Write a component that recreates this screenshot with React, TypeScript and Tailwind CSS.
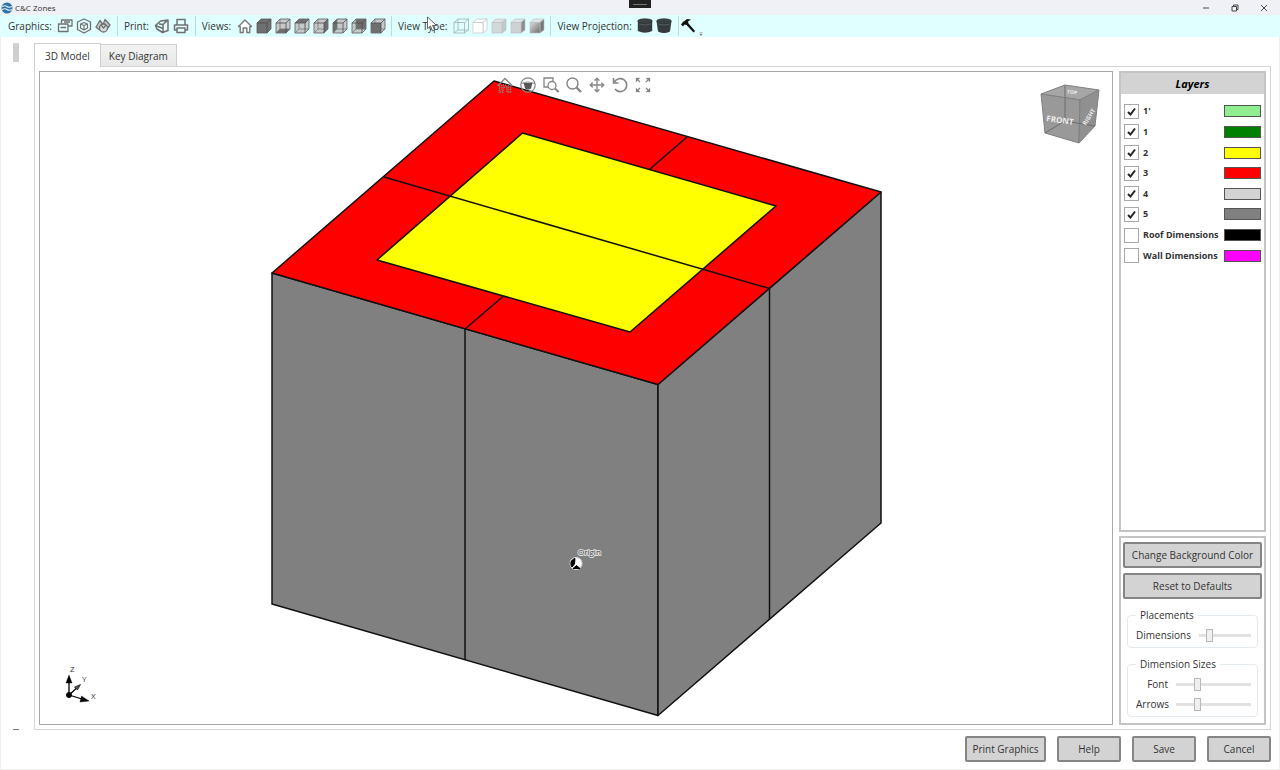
import React, { useState } from 'react';
import { Move } from 'lucide-react';

type Face = 'all' | 'bottom' | 'top' | 'right' | 'left' | 'back' | 'front';
type Shade = 'wire' | 'hidden' | 'flat' | 'shaded' | 'render';

interface Layer {
  id: string;
  color: string;
  visible: boolean;
}

const INITIAL_LAYERS: Layer[] = [
  { id: "1'", color: '#90ee90', visible: true },
  { id: '1', color: '#008000', visible: true },
  { id: '2', color: '#ffff00', visible: true },
  { id: '3', color: '#ff0000', visible: true },
  { id: '4', color: '#d3d3d3', visible: true },
  { id: '5', color: '#808080', visible: true },
  { id: 'Roof Dimensions', color: '#000000', visible: false },
  { id: 'Wall Dimensions', color: '#ff00ff', visible: false },
];

const FACE_POINTS: Record<Exclude<Face, 'all'>, string> = {
  bottom: '1,15 5,11 15,11 11,15',
  top: '1,5 5,1 15,1 11,5',
  right: '11,5 15,1 15,11 11,15',
  left: '1,5 5,1 5,11 1,15',
  back: '5,1 15,1 15,11 5,11',
  front: '1,5 11,5 11,15 1,15',
};

const FACES: Face[] = ['all', 'bottom', 'top', 'right', 'left', 'back', 'front'];
const SHADES: Shade[] = ['wire', 'hidden', 'flat', 'shaded', 'render'];

const FaceIcon: React.FC<{ face: Face }> = ({ face }) => (
  <svg viewBox="0 0 16 16" className="h-4 w-4" strokeLinejoin="round" strokeWidth=".8">
    <polygon points="1,5 5,1 15,1 15,11 11,15 1,15" fill={face === 'all' ? '#707070' : '#c6c9c9'} stroke="#5c5c5c" />
    {face !== 'all' && <polygon points={FACE_POINTS[face]} fill="#6e6e6e" />}
    {face !== 'all' && <path d="M5 1V11H15M5 11L1 15" stroke="#777" fill="none" />}
    <path d="M1 5H11V15M11 5L15 1" stroke="#4c4c4c" fill="none" />
  </svg>
);

const ShadeIcon: React.FC<{ shade: Shade }> = ({ shade }) => {
  if (shade === 'wire') {
    return (
      <svg viewBox="0 0 16 16" className="h-4 w-4" fill="none" stroke="#9fb0b0" strokeWidth=".8">
        <path d="M1 4.500H11.500V15H1ZM5 1H15.500V12H5ZM1 4.500L5 1M11.500 4.500L15.500 1M11.500 15L15.500 12M1 15L5 12" />
      </svg>
    );
  }
  const side = { hidden: '#fff', flat: '#c4c9c9', shaded: '#8d8d8d', render: '#777' }[shade];
  const front = { hidden: '#fff', flat: '#d3d8d8', shaded: '#cfd2d2', render: 'url(#renderFront)' }[shade];
  return (
    <svg viewBox="0 0 16 16" className="h-4 w-4" stroke="#b5bcbc" strokeWidth=".6">
      <defs>
        <linearGradient id="renderFront" x1="0" x2="1" y1="0" y2="1">
          <stop offset="0" stopColor="#ddd" />
          <stop offset="1" stopColor="#6d6d6d" />
        </linearGradient>
      </defs>
      <polygon points="1,4.500 5,1 15,1 11,4.500" fill={shade === 'hidden' ? '#fff' : '#dfe3e3'} />
      <polygon points="11,4.500 15,1 15,12 11,15" fill={side} />
      <rect x="1" y="4.500" width="10" height="10.500" fill={front} />
    </svg>
  );
};

const HomeIcon = () => (
  <svg viewBox="0 0 16 16" className="h-4 w-4" fill="#fff" stroke="#777" strokeWidth="1.400" strokeLinejoin="round">
    <path d="M1.500 8.500L8 2L14.500 8.500H12.800V14.500H9.800V10H6.200V14.500H3.200V8.500Z" />
  </svg>
);

const CylinderIcon: React.FC<{ tapered?: boolean }> = ({ tapered }) => (
  <svg viewBox="0 0 16 16" className="h-4 w-4">
    <path d={tapered ? 'M.5 3L2 13.500Q8 16.500 14 13.500L15.500 3Z' : 'M.8 3V13Q8 16.500 15.200 13V3Z'} fill="#363b3d" />
    <ellipse cx="8" cy="3" rx="7.300" ry="2.300" fill="#3b4144" stroke="#2c3234" strokeWidth=".6" />
    <path d="M2 6Q8 8 14 6" stroke="#59636a" fill="none" strokeWidth=".8" />
  </svg>
);

const ToolButton: React.FC<{ label: string; children: React.ReactNode }> = ({ label, children }) => (
  <button type="button" aria-label={label} title={label} className="flex h-5 w-[19px] shrink-0 items-center justify-center">
    {children}
  </button>
);

const ToolGroup: React.FC<{ label: string; children: React.ReactNode }> = ({ label, children }) => (
  <div className="flex h-5 shrink-0 items-center border-r border-[#bcdcdc] pr-1 pl-1.5">
    <span className="mr-1 whitespace-nowrap">{label}</span>
    {children}
  </div>
);

const line = { fill: 'none', stroke: '#707070', strokeWidth: 1.3, strokeLinejoin: 'round' as const };

const Toolbar = () => (
  <div className="flex h-[22px] shrink-0 items-center bg-[#e0ffff] pl-0.5">
    <ToolGroup label="Graphics:">
      <ToolButton label="Copy graphics">
        <svg viewBox="0 0 16 16" className="h-4 w-4" {...line}>
          <path d="M4.500 5V2H15V8H11.500M1.500 6H11V13.500H1.500ZM7 4H13M3.500 9.500H9" />
        </svg>
      </ToolButton>
      <ToolButton label="Box graphics">
        <svg viewBox="0 0 16 16" className="h-4 w-4" {...line}>
          <path d="M8 1L14.500 4V11.500L8 15L1.500 11.500V4Z" />
          <path d="M4.500 6L8 4.500L11.500 6V10L8 12L4.500 10ZM4.500 6L8 7.500L11.500 6M8 7.500V12" strokeWidth="1.100" />
        </svg>
      </ToolButton>
      <ToolButton label="Graphic shapes">
        <svg viewBox="0 0 16 16" className="h-4 w-4" {...line}>
          <path d="M5 2.500L8 6.500L4.500 12L1 9ZM10 1.500L15 7L12 11L8 7Z" fill="#c3caca" />
          <circle cx="8.500" cy="10" r="4" fill="#d5dcdc" />
          <path d="M6 7L8.500 10L11 7" />
        </svg>
      </ToolButton>
    </ToolGroup>
    <ToolGroup label="Print:">
      <ToolButton label="Print preview">
        <svg viewBox="0 0 16 16" className="h-4 w-4" {...line} strokeWidth="1.500">
          <path d="M1.500 7.500L6.500 3L14 2V12.500L8.500 14.500L3 11ZM5 6L9 6.500L14 2M9 6.500V14M1.500 7.500L9 10.500" />
        </svg>
      </ToolButton>
      <ToolButton label="Print">
        <svg viewBox="0 0 16 16" className="h-4 w-4" {...line} strokeWidth="1.500">
          <path d="M4 7V1.500H12V7M3.500 12H1.500V7H14.500V12H12.500M4 10H12V14.500H4Z" />
        </svg>
      </ToolButton>
    </ToolGroup>
    <ToolGroup label="Views:">
      <ToolButton label="Home view">
        <HomeIcon />
      </ToolButton>
      {FACES.map((face) => (
        <ToolButton key={face} label={`View ${face}`}>
          <FaceIcon face={face} />
        </ToolButton>
      ))}
    </ToolGroup>
    <ToolGroup label="View Type:">
      {SHADES.map((shade) => (
        <ToolButton key={shade} label={`Style ${shade}`}>
          <ShadeIcon shade={shade} />
        </ToolButton>
      ))}
    </ToolGroup>
    <ToolGroup label="View Projection:">
      <ToolButton label="Orthographic">
        <CylinderIcon />
      </ToolButton>
      <ToolButton label="Perspective">
        <CylinderIcon tapered />
      </ToolButton>
    </ToolGroup>
    <div className="flex items-end">
      <ToolButton label="Settings">
        <svg viewBox="0 0 16 16" className="h-4 w-4">
          <path d="M1 6.500L3 4L7 1L11 1.500L8 3.500L8.500 5.500L15 13L13.500 14.500L6.500 7L4.500 6.500L3 8.500Z" fill="#111" />
        </svg>
      </ToolButton>
      <svg viewBox="0 0 5 5" className="h-1 w-1.5">
        <path d="M.5 .5H4.500M1 2.500H4L2.500 4.500Z" fill="#777" stroke="#777" strokeWidth=".6" />
      </svg>
    </div>
  </div>
);

const TitleBar = () => (
  <header className="flex h-[15px] shrink-0 items-center justify-between bg-[#eff1f6] pr-3 pl-px">
    <div className="flex items-center gap-0.5">
      <svg viewBox="0 0 12 12" className="h-3 w-3">
        <circle cx="6" cy="6" r="5.500" fill="#2f74a8" />
        <path d="M1 4.500Q4 3 6 4.500T11 4.500M1 7.500Q4 6 6 7.500T11 7.500" stroke="#e8f2f8" fill="none" strokeWidth="1.200" />
      </svg>
      <h1 className="text-[8px] leading-3 text-[#333]">C&amp;C Zones</h1>
    </div>
    <div className="flex items-center gap-[21px]">
      <button type="button" aria-label="Minimize">
        <svg viewBox="0 0 8 8" className="h-2 w-2" stroke="#444" fill="none"><path d="M1 4H7" /></svg>
      </button>
      <button type="button" aria-label="Restore">
        <svg viewBox="0 0 8 8" className="h-2 w-2" stroke="#444" fill="none"><path d="M1 2.500H5.500V7H1ZM2.500 2.500V1H7V5.500H5.500" /></svg>
      </button>
      <button type="button" aria-label="Close">
        <svg viewBox="0 0 8 8" className="h-2 w-2" stroke="#444" fill="none"><path d="M1 1L7 7M7 1L1 7" /></svg>
      </button>
    </div>
  </header>
);

const NavButtons = () => (
  <div className="absolute inset-x-0 top-[5px] flex justify-center gap-[7px] pr-1 text-[#858585]">
    <button type="button" aria-label="Home">
      <svg viewBox="0 0 16 16" className="h-4 w-4" fill="none" stroke="currentColor" strokeWidth="1.300">
        <path d="M.5 9L8 1.500L15.500 9" />
        <path d="M2.500 8V15H6V10H10V15H13.500V8" strokeDasharray="1.500 .8" />
        <path d="M4.500 8V14M11.500 8V14M6 8H10" strokeDasharray="1 1" />
      </svg>
    </button>
    <button type="button" aria-label="Orbit">
      <svg viewBox="0 0 16 16" className="h-4 w-4" fill="none" stroke="currentColor" strokeWidth="1.200">
        <circle cx="8" cy="8" r="7.200" />
        <path d="M2 6.500Q8 3.500 14 6.500" />
        <path d="M4.500 6.500H11.500L10.500 11L8 12L5.500 11Z" fill="#555" stroke="#555" />
      </svg>
    </button>
    <button type="button" aria-label="Zoom window">
      <svg viewBox="0 0 16 16" className="h-4 w-4" fill="none" stroke="currentColor" strokeWidth="1.300">
        <path d="M5 10H1V1H10V4.500" />
        <circle cx="9" cy="8.500" r="4" />
        <path d="M12 11.500L15.500 15" strokeWidth="2" />
      </svg>
    </button>
    <button type="button" aria-label="Zoom">
      <svg viewBox="0 0 16 16" className="h-4 w-4" fill="none" stroke="currentColor" strokeWidth="1.400">
        <circle cx="6.500" cy="6.500" r="5.500" />
        <path d="M10.500 10.500L15 15" strokeWidth="2.400" />
      </svg>
    </button>
    <button type="button" aria-label="Pan">
      <Move className="h-4 w-4" />
    </button>
    <button type="button" aria-label="Rotate">
      <svg viewBox="0 0 16 16" className="h-4 w-4" fill="none" stroke="currentColor" strokeWidth="1.600">
        <path d="M2.500 5A6.500 6.500 0 1 1 3 12M1.500 1V6H6.500" />
      </svg>
    </button>
    <button type="button" aria-label="Zoom to fit">
      <svg viewBox="0 0 16 16" className="h-4 w-4" fill="currentColor" stroke="currentColor" strokeWidth="1.200">
        <path d="M1 1H5L1 5ZM15 1V5L11 1ZM1 15V11L5 15ZM15 15H11L15 11Z" strokeWidth=".3" />
        <path d="M2 2L5 5M14 2L11 5M2 14L5 11M14 14L11 11" />
      </svg>
    </button>
  </div>
);

const ViewCube = () => (
  <svg viewBox="0 0 60 60" className="absolute top-3 right-3 h-[60px] w-[60px]" strokeLinejoin="round">
    <polygon points="1,10 25,1 59,6 40,16" fill="#a6a6a6" stroke="#808080" />
    <polygon points="1,10 40,16 39,59 5,49" fill="#999" stroke="#808080" />
    <polygon points="40,16 59,6 55,42 39,59" fill="#909090" stroke="#808080" />
    <path d="M25 1V37L5 49M25 37L55 42" stroke="#6c6c6c" fill="none" />
    <g fill="#eee" fontWeight="700" textAnchor="middle">
      <text x="20" y="39" fontSize="8" transform="rotate(8 20 36)">FRONT</text>
      <text x="49" y="35" fontSize="6" transform="rotate(-58 49 33)">RIGHT</text>
      <text x="32" y="10" fontSize="5" transform="rotate(6 32 8)">TOP</text>
    </g>
  </svg>
);

const AxisTriad = () => (
  <svg viewBox="0 0 36 40" className="absolute bottom-5 left-5 h-10 w-9" fill="#000" stroke="#000">
    <path d="M9 31V17M9 31L19 22M9 31L22 35" strokeWidth="1.300" />
    <circle cx="9" cy="31" r="2.500" />
    <path d="M9 11L12 19H6ZM29 37L20 38L21.500 32Z" strokeWidth=".4" />
    <path d="M20.500 20.500L17.500 26L14.500 23Z" fill="#555" strokeWidth=".6" />
    <g fontSize="8" fill="#333" stroke="none">
      <text x="10" y="8">Z</text>
      <text x="22" y="18">Y</text>
      <text x="31" y="35">X</text>
    </g>
  </svg>
);

const Building: React.FC<{ layers: Layer[] }> = ({ layers }) => {
  const fillOf = (id: string) => {
    const layer = layers.find((l) => l.id === id);
    return layer?.visible ? layer.color : 'none';
  };

  return (
    <svg viewBox="0 0 1072 652" className="min-h-0 min-w-0 flex-1" stroke="#111" strokeWidth="1.500" strokeLinejoin="round">
      {/* walls */}
      <polygon points="232,201 618,312.500 618,643.500 232,532" fill={fillOf('5')} />
      <polygon points="618,312.500 841,120 841,451 618,643.500" fill={fillOf('5')} />
      {/* roof */}
      <polygon points="454,9 841,120 618,312.500 232,201" fill={fillOf('3')} />
      <polygon points="482.500,61 736,134 590,260 337,188" fill={fillOf('2')} />
      <path d="M344 105L729.500 216.500V547.500M647 65L610 97M463 224.500L425 257V588" fill="none" />
      {/* origin marker */}
      <circle cx="536" cy="491.500" r="6" fill="#fff" stroke="#ddd" strokeWidth="1" />
      <path d="M535 486.500A5.300 5.300 0 0 0 532 495L534.500 492ZM533 496.500H540L536.500 493.500Z" fill="#000" stroke="#000" strokeWidth="1" />
      <text x="538" y="483" fontSize="8" fill="#444" stroke="#ddd" strokeWidth="2" paintOrder="stroke">Origin</text>
    </svg>
  );
};

const LayerPanel: React.FC<{ layers: Layer[]; onToggle: (id: string) => void }> = ({ layers, onToggle }) => (
  <section className="flex-1 border-2 border-[#c4c4c4]">
    <h2 className="bg-[#d3d3d3] pt-[3px] pb-0.5 text-center text-[11px] leading-4 font-bold text-black italic">Layers</h2>
    <ul className="mt-[7px] grid h-[165px] grid-cols-1 grid-rows-8 pr-[3px] pl-[3px]">
      {layers.map(({ id, color, visible }) => (
        <li key={id} className="flex items-center justify-between">
          <label className="flex items-center gap-1 text-[9px] font-bold whitespace-nowrap">
            <span className="grid h-[15px] w-[15px]">
              <input
                type="checkbox"
                checked={visible}
                onChange={() => onToggle(id)}
                className="peer col-start-1 row-start-1 h-[15px] w-[15px] appearance-none border border-[#a8a8a8] bg-white"
              />
              <svg viewBox="0 0 15 15" className="pointer-events-none invisible col-start-1 row-start-1 h-[15px] w-[15px] peer-checked:visible">
                <path d="M4 8L6.500 10.500L11 4.500" stroke="#222" strokeWidth="2" fill="none" />
              </svg>
            </span>
            {id}
          </label>
          <button type="button" aria-label={`${id} color`} className="h-3 w-[37px] shrink-0 border border-[#555]" style={{ background: color }} />
        </li>
      ))}
    </ul>
  </section>
);

const sliderClass =
  'h-[14px] w-full min-w-0 flex-1 appearance-none bg-transparent [&::-webkit-slider-runnable-track]:h-[3px] [&::-webkit-slider-runnable-track]:bg-[#e2e2e2] [&::-webkit-slider-thumb]:-mt-[5px] [&::-webkit-slider-thumb]:h-[13px] [&::-webkit-slider-thumb]:w-[7px] [&::-webkit-slider-thumb]:appearance-none [&::-webkit-slider-thumb]:border [&::-webkit-slider-thumb]:border-[#b8b8b8] [&::-webkit-slider-thumb]:bg-[#efefef]';

const Button: React.FC<{ className?: string; children: React.ReactNode }> = ({ className = '', children }) => (
  <button type="button" className={`h-[26px] rounded-xs border-2 border-[#858585] bg-[#d3d3d3] whitespace-nowrap ${className}`}>
    {children}
  </button>
);

const SettingsPanel = () => (
  <section className="flex flex-col border-2 border-[#c4c4c4] px-0.5 pt-1 pb-1.5">
    <Button>Change Background Color</Button>
    <Button className="mt-[5px]">Reset to Defaults</Button>
    <fieldset className="mx-1 mt-2 min-w-0 rounded-sm border border-[#e3eaef] pt-0.5 pr-1.5 pb-0.5 pl-2">
      <legend className="px-1 leading-4">Placements</legend>
      <label className="flex h-5 items-center gap-2">
        Dimensions
        <input type="range" defaultValue={16} className={sliderClass} />
      </label>
    </fieldset>
    <fieldset className="mx-1 mt-2 min-w-0 rounded-sm border border-[#e3eaef] pt-0.5 pr-1.5 pb-0.5 pl-2">
      <legend className="px-1 leading-4">Dimension Sizes</legend>
      <label className="flex h-5 items-center gap-2">
        <span className="w-8 text-right">Font</span>
        <input type="range" defaultValue={26} className={sliderClass} />
      </label>
      <label className="flex h-5 items-center gap-2">
        <span className="w-8 text-right">Arrows</span>
        <input type="range" defaultValue={26} className={sliderClass} />
      </label>
    </fieldset>
  </section>
);

export default function App() {
  const [layers, setLayers] = useState(INITIAL_LAYERS);
  const [tab, setTab] = useState<'model' | 'key'>('model');

  const toggleLayer = (id: string) => {
    setLayers(layers.map((l) => (l.id === id ? { ...l, visible: !l.visible } : l)));
  };

  const tabClass = (active: boolean) =>
    active
      ? 'relative -mb-px h-6 border border-b-0 border-[#cfcfcf] bg-white px-2.5'
      : 'h-[22px] border border-b-0 border-l-0 border-[#cfcfcf] bg-linear-to-b from-[#f2f2f2] to-[#e8e8e8] px-2';

  return (
    <div className="relative flex h-screen min-h-[560px] flex-col overflow-hidden bg-white font-['Open_Sans','Noto_Sans',sans-serif] text-[10px] leading-4 text-[#333]">
      <TitleBar />
      <Toolbar />

      <div className="absolute top-0 left-1/2 flex h-2 w-[22px] -translate-x-1/2 items-center justify-center bg-[#222]">
        <span className="h-px w-3.5 bg-[#777]" />
      </div>
      <svg viewBox="0 0 12 18" className="absolute top-4 left-[426px] h-[18px] w-3" fill="#fff" stroke="#444" strokeWidth=".8">
        <path d="M1.500 1V12.500L4.500 10L6.500 15L8.500 14L6.500 9.500H10.500Z" />
      </svg>

      <main className="flex min-h-0 flex-1 border-x border-[#eee] pt-1.5 pr-2">
        <aside className="flex w-[33px] shrink-0 flex-col items-start justify-between pl-3">
          <div className="h-[19px] w-1.5 bg-[#cfcfcf]" />
          <div className="h-px w-1.5 bg-[#777]" />
        </aside>

        <div className="flex min-w-0 flex-1 flex-col">
          <div role="tablist" className="flex items-end">
            <button type="button" role="tab" aria-selected={tab === 'model'} onClick={() => setTab('model')} className={tabClass(tab === 'model')}>
              3D Model
            </button>
            <button type="button" role="tab" aria-selected={tab === 'key'} onClick={() => setTab('key')} className={tabClass(tab === 'key')}>
              Key Diagram
            </button>
          </div>

          <div className="flex min-h-0 flex-1 gap-1.5 border border-[#d5d5d5] p-1">
            <div className="relative flex min-w-0 flex-1 border border-[#a8a8a8]">
              <Building layers={layers} />
              <NavButtons />
              <ViewCube />
              <AxisTriad />
            </div>
            <div className="flex w-[147px] shrink-0 flex-col gap-1">
              <LayerPanel layers={layers} onToggle={toggleLayer} />
              <SettingsPanel />
            </div>
          </div>
        </div>
      </main>

      <footer className="flex shrink-0 justify-end gap-[11px] border border-t-0 border-[#eee] px-2 pt-1.5 pb-[7px]">
        <Button className="w-[81px]">Print Graphics</Button>
        <Button className="w-16">Help</Button>
        <Button className="w-16">Save</Button>
        <Button className="w-16">Cancel</Button>
      </footer>
    </div>
  );
}
